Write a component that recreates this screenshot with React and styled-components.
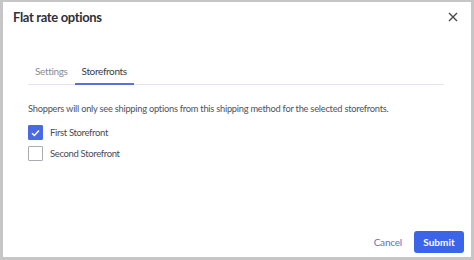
import React from "react";
import styled, { createGlobalStyle } from "styled-components";

const Global = createGlobalStyle`
  html, body {
    margin: 0;
    padding: 0;
    width: 474px;
    height: 260px;
    overflow: hidden;
    background: #c6c6c6;
  }
  * { box-sizing: border-box; }
`;

function App() {
  return (
    <>
      <Global />
      <Frame>
        <Modal>
          <Header>
            <Title>Flat rate options</Title>
            <Close aria-label="close">
              <svg width="10" height="10" viewBox="0 0 10 10">
                <path d="M1 1L9 9M9 1L1 9" stroke="#4a4a4a" strokeWidth="1.4" />
              </svg>
            </Close>
          </Header>
          <Tabs>
            <Tab>Settings</Tab>
            <Tab active>Storefronts</Tab>
          </Tabs>
          <Body>
            <Note>
              Shoppers will only see shipping options from this shipping method for the selected storefronts.
            </Note>
            <CheckRow>
              <Box checked>
                <svg width="9" height="8" viewBox="0 0 9 8">
                  <path d="M1 4.2L3.4 6.5L8 1.5" stroke="#fff" strokeWidth="1.5" fill="none" />
                </svg>
              </Box>
              <Label>First Storefront</Label>
            </CheckRow>
            <CheckRow>
              <Box />
              <Label>Second Storefront</Label>
            </CheckRow>
          </Body>
          <Footer>
            <Cancel>Cancel</Cancel>
            <Submit>Submit</Submit>
          </Footer>
        </Modal>
      </Frame>
    </>
  );
}

export default App;

const Frame = styled.div`
  width: 474px;
  height: 260px;
  padding: 2px 3px 3px 3px;
`;

const Modal = styled.div`
  width: 100%;
  height: 100%;
  background: #fff;
  display: flex;
  flex-direction: column;
  font-family: Lato, "Open Sans", sans-serif;
  color: #313440;
`;

const Header = styled.div`
  display: flex;
  justify-content: space-between;
  align-items: center;
  padding: 4px 12px 0 10px;
  height: 26px;
`;

const Title = styled.div`
  font-size: 13px;
  font-weight: 700;
  color: #2f3038;
  letter-spacing: -0.35px;
`;

const Close = styled.div`
  display: flex;
  align-items: center;
  justify-content: center;
  width: 12px;
  height: 12px;
`;

const Tabs = styled.div`
  display: flex;
  margin: 37px 27px 0 25px;
  border-bottom: 1px solid #e4e6ec;
`;

const Tab = styled.div`
  font-size: 10px;
  letter-spacing: -0.35px;
  padding: 0 7px 6px 7px;
  margin-bottom: -1px;
  color: ${(p) => (p.active ? "#3a3c48" : "#8a8c94")};
  border-bottom: 2px solid ${(p) => (p.active ? "#5a72d8" : "transparent")};
`;

const Body = styled.div`
  padding: 18px 0 0 25px;
  display: flex;
  flex-direction: column;
  flex: 1;
`;

const Note = styled.div`
  font-size: 9.3px;
  letter-spacing: -0.25px;
  color: #4f525c;
  margin-bottom: 11px;
`;

const CheckRow = styled.div`
  display: flex;
  align-items: center;
  height: 15px;
  margin-bottom: 6px;
`;

const Box = styled.div`
  width: 15px;
  height: 15px;
  border-radius: 1px;
  display: flex;
  align-items: center;
  justify-content: center;
  background: ${(p) => (p.checked ? "#4a6ae4" : "#fff")};
  border: 1px solid ${(p) => (p.checked ? "#4a6ae4" : "#a9abb2")};
`;

const Label = styled.span`
  font-size: 9.5px;
  letter-spacing: -0.35px;
  color: #4a4c56;
  margin-left: 7px;
`;

const Footer = styled.div`
  display: flex;
  justify-content: flex-end;
  align-items: center;
  gap: 12px;
  padding: 0 7px 4px 0;
`;

const Cancel = styled.span`
  font-size: 10px;
  letter-spacing: -0.2px;
  color: #5b6fcf;
`;

const Submit = styled.button`
  font-family: Lato, "Open Sans", sans-serif;
  font-size: 10px;
  font-weight: 700;
  color: #fff;
  background: #3c64e8;
  border: none;
  border-radius: 3px;
  width: 50px;
  height: 22px;
  padding: 0;
`;
